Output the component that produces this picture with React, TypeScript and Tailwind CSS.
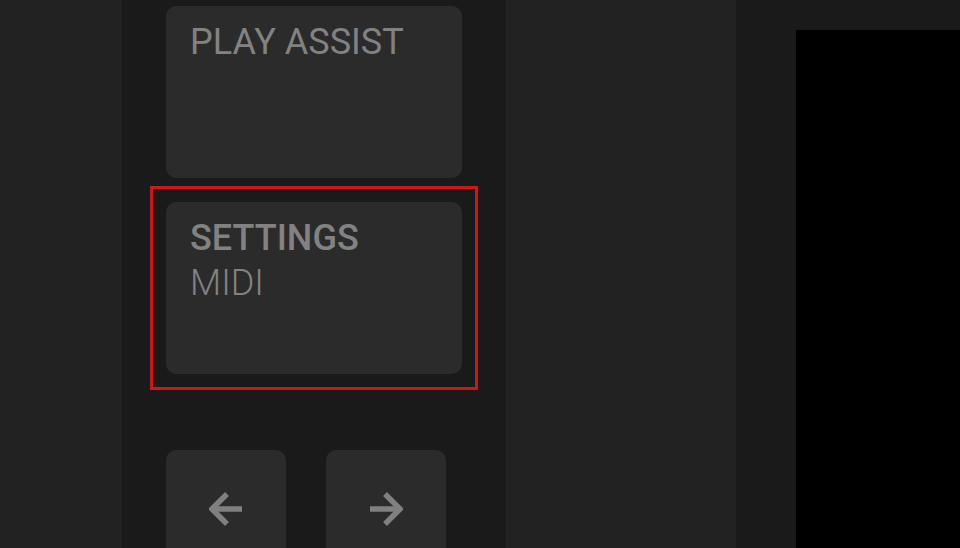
import React from "react";

function Arrow({ dir }: { dir: "left" | "right" }) {
  return (
    <svg
      width="34"
      height="34"
      viewBox="0 0 34 34"
      fill="none"
      stroke="#808080"
      strokeWidth="5.5"
      className={dir === "right" ? "-scale-x-100" : ""}
    >
      <path d="M18 2 L3 17 L18 32" />
      <path d="M4 17 H33" />
    </svg>
  );
}

function Card({ children }: { children: React.ReactNode }) {
  return (
    <div className="h-[172px] w-[296px] shrink-0 rounded-[10px] bg-[#2b2b2b] px-[24px] pt-[14px] text-[36px] leading-[45px] text-[#828282]">
      {children}
    </div>
  );
}

export default function App() {
  return (
    <div
      className="flex h-[548px] w-[960px] overflow-hidden bg-[#1a1a1a]"
      style={{ fontFamily: "Roboto, 'Noto Sans', sans-serif" }}
    >
      <div className="w-[122px] shrink-0 bg-[#222222]" />
      <div className="flex w-[384px] shrink-0 flex-col bg-[#1a1a1a] pl-[44px] pt-[6px]">
        <Card>PLAY ASSIST</Card>
        <div className="-ml-4 mt-2 w-[328px] shrink-0 border-[3px] border-[#d0141b] p-[13px]">
          <Card>
            <div className="font-medium">SETTINGS</div>
            <div className="font-light">MIDI</div>
          </Card>
        </div>
        <div className="mt-[60px] flex shrink-0 gap-10">
          <button className="flex h-[120px] w-[120px] items-start justify-center rounded-[10px] bg-[#2b2b2b] pt-[42px]">
            <Arrow dir="left" />
          </button>
          <button className="flex h-[120px] w-[120px] items-start justify-center rounded-[10px] bg-[#2b2b2b] pt-[42px]">
            <Arrow dir="right" />
          </button>
        </div>
      </div>
      <div className="w-[230px] shrink-0 bg-[#222222]" />
      <div className="flex flex-1 flex-col pt-[30px] pl-[60px]">
        <div className="flex-1 bg-black" />
      </div>
    </div>
  );
}
